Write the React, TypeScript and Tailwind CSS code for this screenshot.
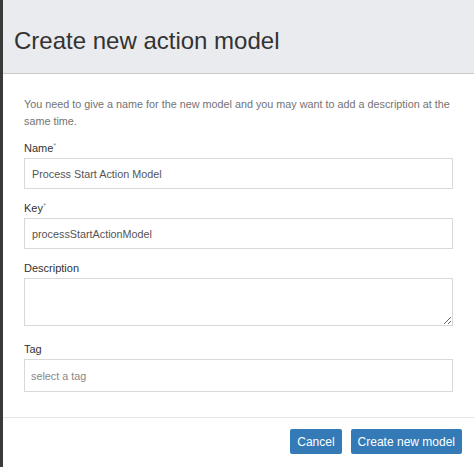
export default function App() {
  const fields = [
    { label: "Name", required: true, value: "Process Start Action Model" },
    { label: "Key", required: true, value: "processStartActionModel" },
  ];

  return (
    <div className="flex min-h-[467px] bg-white font-['Liberation_Sans',Arial,sans-serif]">
      <div className="w-[3px] shrink-0 bg-[#3a3a3a]" />
      <div className="flex flex-1 flex-col">
        <div className="h-[74px] border-b border-[#c9c9c9] bg-[#e9ebee] px-[11px] pt-[27px]">
          <h1 className="text-[24px] leading-[28px] text-[#333]">Create new action model</h1>
        </div>

        <div className="px-[21px] pt-[22px] pb-[25px]">
          <p className="mb-[11px] text-[10.8px] leading-[17px] text-[#737373]">
            You need to give a name for the new model and you may want to add a description at the same time.
          </p>

          {fields.map((f) => (
            <div key={f.label} className="mb-[12px]">
              <label className="mb-[2px] block text-[11px] leading-[15px] text-[#333]">
                {f.label}
                {f.required && <span className="align-top text-[8px] leading-[10px] text-[#999]">*</span>}
              </label>
              <input
                readOnly
                value={f.value}
                className="block h-[31px] w-full border border-[#d9d9d9] px-[7px] text-[10.8px] text-[#555] outline-none"
              />
            </div>
          ))}

          <div className="mb-[16px]">
            <label className="mb-[2px] block text-[11px] leading-[15px] text-[#333]">Description</label>
            <textarea className="block h-[48px] w-full border border-[#d9d9d9] px-[7px] py-[5px] text-[10.8px] text-[#555] outline-none" />
          </div>

          <div>
            <label className="mb-[2px] block text-[11px] leading-[15px] text-[#333]">Tag</label>
            <input
              readOnly
              placeholder="select a tag"
              className="block h-[33px] w-full border border-[#d9d9d9] px-[6px] text-[10.8px] text-[#555] outline-none placeholder:text-[#888]"
            />
          </div>
        </div>

        <div className="flex flex-1 justify-end gap-[9px] border-t border-[#e5e5e5] pt-[11px] pr-[12px] pb-[13px]">
          <button className="h-[25px] rounded-[2px] bg-[#337ab7] px-[7px] text-[12px] text-white">Cancel</button>
          <button className="h-[25px] rounded-[2px] bg-[#337ab7] px-[7px] text-[12px] text-white">Create new model</button>
        </div>
      </div>
    </div>
  );
}
